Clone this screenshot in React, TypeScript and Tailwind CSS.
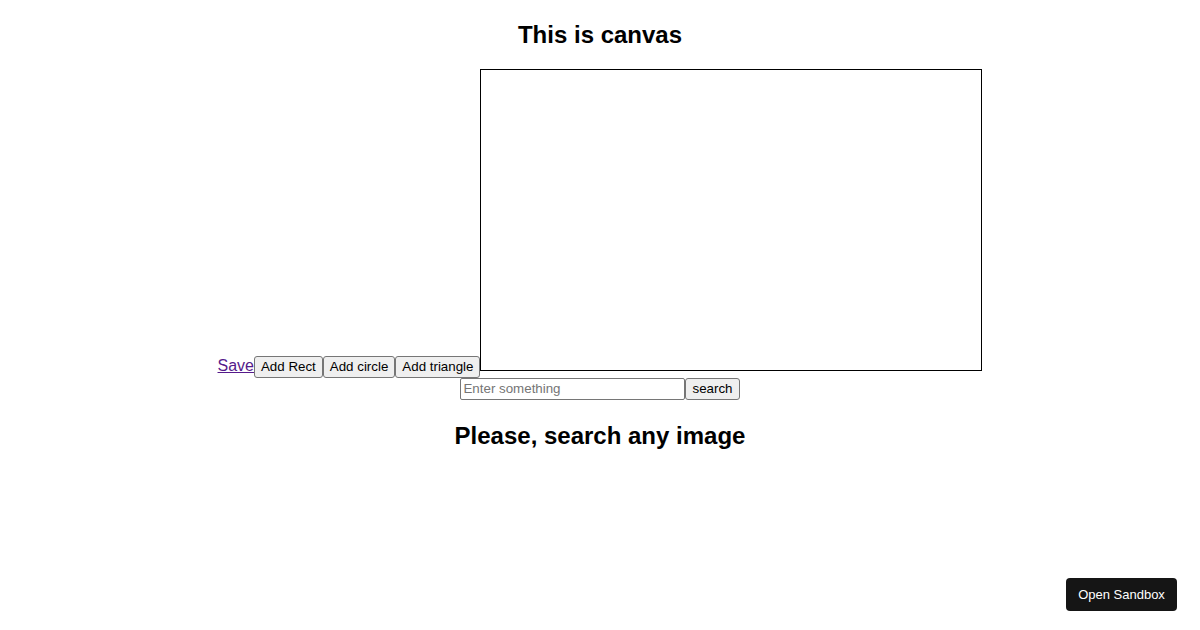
import React from "react";

export default function App() {
  const btn =
    "h-[22px] bg-[#efefef] border border-[#767676] rounded-[3px] px-[6px] py-0 text-[13.33px] leading-[normal] text-black font-['Liberation_Sans',Arial,sans-serif] align-baseline";
  return (
    <div className="text-center text-black bg-white font-['Liberation_Sans',Arial,sans-serif] text-[16px] leading-[normal] min-h-[630px]">
      <h2 className="text-[24px] font-bold mt-[21px] mb-[20px] leading-[normal]">This is canvas</h2>
      <div>
        <a href="#" className="underline text-[#551a8b]">Save</a>
        <button className={btn}>Add Rect</button>
        <button className={btn}>Add circle</button>
        <button className={btn}>Add triangle</button>
        <canvas width={500} height={300} className="inline-block border border-black w-[502px] h-[302px] align-baseline" />
      </div>
      <div>
        <input
          type="text"
          placeholder="Enter something"
          className="w-[225px] h-[22px] border border-[#767676] rounded-[2px] px-[2px] py-0 text-[13.33px] leading-[normal] placeholder:text-[#757575] align-baseline"
        />
        <button className={btn}>search</button>
      </div>
      <h2 className="text-[24px] font-bold mt-[22px] mb-[20px] leading-[normal]">Please, search any image</h2>
      <button className="fixed right-[23px] bottom-[19px] bg-[#151515] text-white rounded-[4px] w-[111px] h-[33px] text-[13px] font-['Liberation_Sans',Arial,sans-serif]">
        Open Sandbox
      </button>
    </div>
  );
}
